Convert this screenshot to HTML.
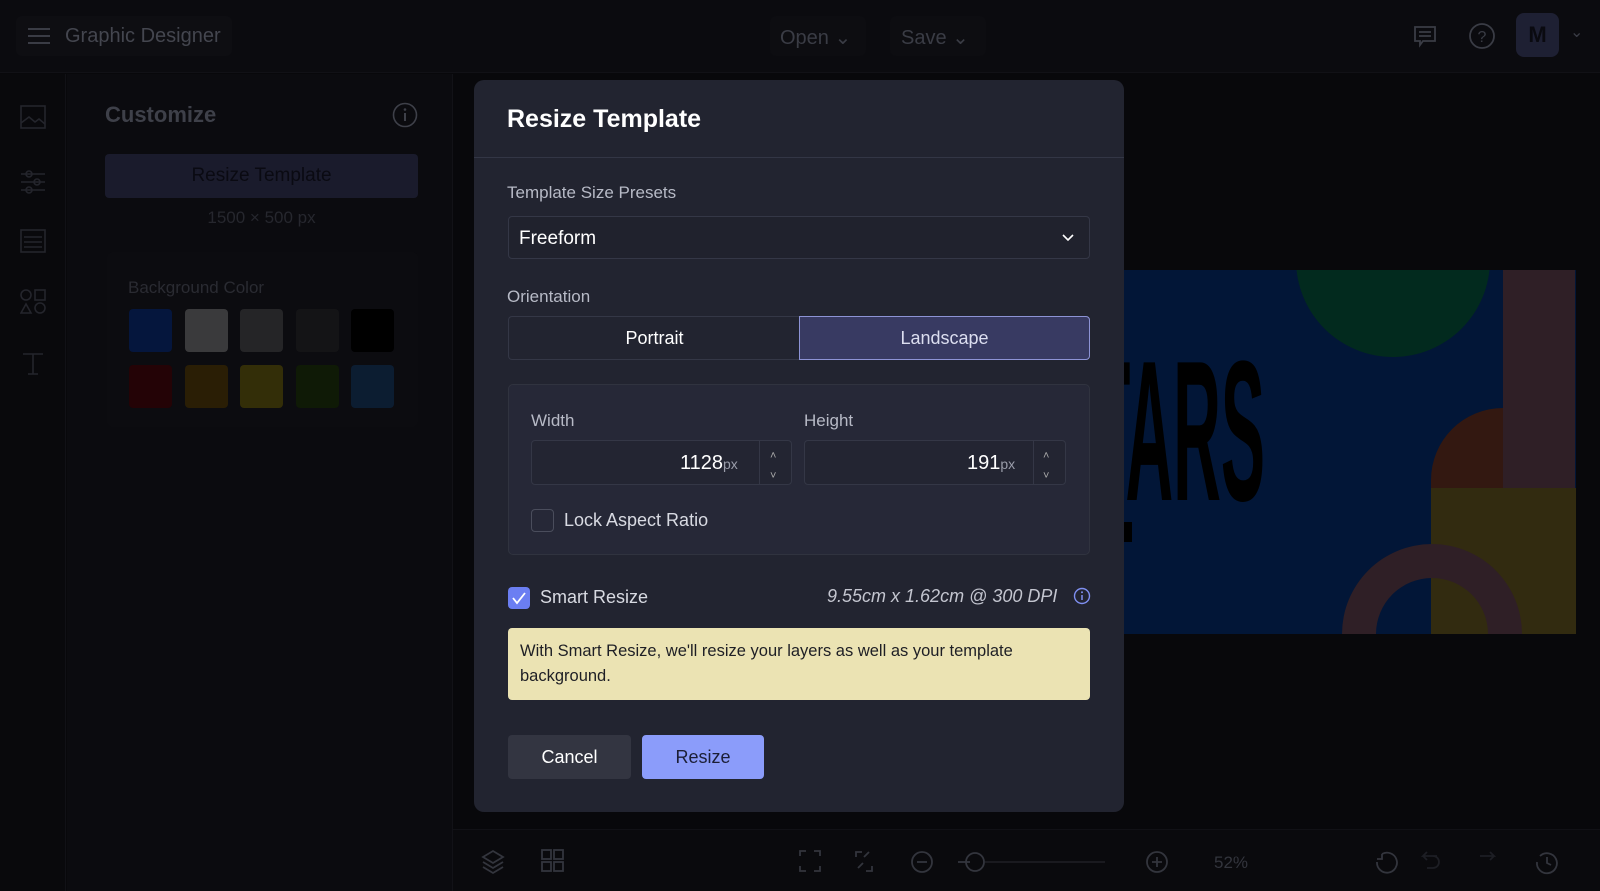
<!DOCTYPE html>
<html><head><meta charset="utf-8"><style>
*{box-sizing:border-box;margin:0;padding:0}
body{width:1600px;height:891px;background:#08080b;font-family:"Liberation Sans",sans-serif;position:relative;overflow:hidden;color:#fff}
.a{position:absolute}
.dim{color:#3b3d46}
.lbl{font-size:17px;color:#b7bac6}
</style></head><body>
<!-- top bar -->
<div class="a" style="left:0;top:0;width:1600px;height:73px;background:#0b0b0f;border-bottom:1px solid #111116"></div>
<div class="a" style="left:16px;top:16px;width:216px;height:40px;background:#0e0e12;border-radius:6px"></div>
<svg class="a" style="left:27px;top:26px" width="24" height="20"><g stroke="#3a3c45" stroke-width="2"><line x1="1" y1="3" x2="23" y2="3"/><line x1="1" y1="10" x2="23" y2="10"/><line x1="1" y1="17" x2="23" y2="17"/></g></svg>
<div class="a dim" style="left:65px;top:25px;font-size:20px;color:#44464f">Graphic Designer</div>
<div class="a" style="left:770px;top:16px;width:96px;height:40px;background:#0d0d11;border-radius:6px"></div>
<div class="a" style="left:780px;top:25px;font-size:20px;color:#3a3c45">Open ⌄</div>
<div class="a" style="left:890px;top:16px;width:96px;height:40px;background:#0d0d11;border-radius:6px"></div>
<div class="a" style="left:901px;top:25px;font-size:20px;color:#3a3c45">Save ⌄</div>
<svg class="a" style="left:1413px;top:24px" width="24" height="24"><path d="M2 3h20v14H10l-3 4v-4H2z M6 8h12 M6 12h12" fill="none" stroke="#3a3c45" stroke-width="1.8"/></svg>
<svg class="a" style="left:1468px;top:22px" width="28" height="28"><circle cx="14" cy="14" r="12" fill="none" stroke="#3a3c45" stroke-width="1.8"/><text x="14" y="20" font-size="16" text-anchor="middle" fill="#3a3c45" font-family="Liberation Sans">?</text></svg>
<div class="a" style="left:1516px;top:13px;width:43px;height:44px;background:#1e2033;border-radius:8px;color:#0a0a10;font-size:22px;font-weight:bold;text-align:center;line-height:44px">M</div>
<div class="a" style="left:1570px;top:22px;font-size:16px;color:#3a3c45">⌄</div>
<!-- left strip -->
<div class="a" style="left:0;top:74px;width:66px;height:817px;background:#09090c;border-right:1px solid #111116"></div>
<svg class="a" style="left:20px;top:105px" width="26" height="270"><g fill="none" stroke="#24252c" stroke-width="1.6"><rect x="1" y="1" width="24" height="22"/><path d="M1 18l8-6 6 5 4-3 6 5"/><path d="M1 69h24M1 77h24M1 85h24"/><circle cx="9" cy="69" r="3"/><circle cx="17" cy="77" r="3"/><circle cx="9" cy="85" r="3"/><rect x="1" y="125" width="24" height="22"/><path d="M4 132h18M4 137h18M4 142h18"/><circle cx="6" cy="190" r="5"/><rect x="15" y="185" width="10" height="10"/><path d="M1 208l5-9 5 9z"/><circle cx="20" cy="203" r="5"/><path d="M3 249h20M13 249v20M8 269h10"/></g></svg>
<!-- left panel -->
<div class="a" style="left:67px;top:74px;width:386px;height:817px;background:#0b0b0f;border-right:1px solid #121217"></div>
<div class="a" style="left:105px;top:102px;font-size:22px;font-weight:bold;color:#3e4049">Customize</div>
<svg class="a" style="left:392px;top:102px" width="26" height="26"><circle cx="13" cy="13" r="11.5" fill="none" stroke="#3e4049" stroke-width="1.6"/><path d="M13 11v8" stroke="#3e4049" stroke-width="2"/><circle cx="13" cy="7.5" r="1.3" fill="#3e4049"/></svg>
<div class="a" style="left:105px;top:154px;width:313px;height:44px;background:#1a1b2c;border-radius:4px;text-align:center;line-height:44px;font-size:19px;color:#0a0a12">Resize Template</div>
<div class="a" style="left:105px;top:208px;width:313px;text-align:center;font-size:17px;color:#26272e">1500 × 500 px</div>
<div class="a" style="left:107px;top:252px;width:311px;height:175px;background:#0c0c10;border-radius:6px"></div>
<div class="a" style="left:128px;top:278px;font-size:17px;color:#2a2b32">Background Color</div>
<div class="a" style="left:129px;top:309px;width:43px;height:43px;background:#05163d;border-radius:4px"></div>
<div class="a" style="left:185px;top:309px;width:43px;height:43px;background:#3a3a3c;border-radius:4px"></div>
<div class="a" style="left:240px;top:309px;width:43px;height:43px;background:#252527;border-radius:4px"></div>
<div class="a" style="left:296px;top:309px;width:43px;height:43px;background:#141416;border-radius:4px"></div>
<div class="a" style="left:351px;top:309px;width:43px;height:43px;background:#000;border-radius:4px"></div>
<div class="a" style="left:129px;top:365px;width:43px;height:43px;background:#240306;border-radius:4px"></div>
<div class="a" style="left:185px;top:365px;width:43px;height:43px;background:#2a1e05;border-radius:4px"></div>
<div class="a" style="left:240px;top:365px;width:43px;height:43px;background:#332e08;border-radius:4px"></div>
<div class="a" style="left:296px;top:365px;width:43px;height:43px;background:#0f1a06;border-radius:4px"></div>
<div class="a" style="left:351px;top:365px;width:43px;height:43px;background:#0c1d31;border-radius:4px"></div>
<!-- canvas -->
<svg class="a" style="left:1100px;top:270px" width="476" height="364"><rect x="0" y="0" width="476" height="364" fill="#021637"/><circle cx="293" cy="-10" r="97" fill="#022a1e"/><rect x="403" y="0" width="72" height="218" fill="#2f1f26"/><path d="M331 210a72 72 0 0 1 72-72v80h-72z" fill="#331811"/><rect x="331" y="218" width="145" height="146" fill="#322b10"/><path d="M242 364a90 90 0 0 1 180 0h-34a56 56 0 0 0-112 0z" fill="#2f1f26"/><text x="-10" y="230" font-family="Liberation Sans" font-weight="bold" font-size="200" fill="#000" textLength="175" lengthAdjust="spacingAndGlyphs">TARS</text><rect x="24" y="252" width="8" height="20" fill="#000"/></svg>
<!-- bottom bar -->
<div class="a" style="left:453px;top:829px;width:1147px;height:62px;background:#0a0a0d;border-top:1px solid #111116"></div>
<svg class="a" style="left:480px;top:848px" width="1120" height="30"><g fill="none" stroke="#33353d" stroke-width="1.8"><path d="M3 9l10-6 10 6-10 6z M3 14l10 6 10-6 M3 19l10 6 10-6"/><rect x="62" y="2" width="9" height="9"/><rect x="74" y="2" width="9" height="9"/><rect x="62" y="14" width="9" height="9"/><rect x="74" y="14" width="9" height="9"/><path d="M320 8V3h6M334 3h6v5M340 18v5h-6M326 23h-6v-5"/><path d="M376 9V4h6M389 4l-5 5M392 18v5h-6M378 20l5-5"/><circle cx="442" cy="14" r="10"/><path d="M437 14h10"/><path d="M478 14h12"/><circle cx="495" cy="14" r="9"/><path d="M505 14h120" stroke="#1c1d22"/><circle cx="677" cy="14" r="10"/><path d="M672 14h10M677 9v10"/><path d="M902 6a10 10 0 1 1-5 8M902 6v5h-5"/><path d="M957 8h-14l4-4M943 8l4 4M943 8h10a6 6 0 0 1 0 12h-6" stroke="#1d1e24"/><path d="M1000 8h14l-4-4M1014 8l-4 4" stroke="#1d1e24"/><path d="M1060 8a10 10 0 1 1-3 6M1067 9v6l4 2"/></g><text x="734" y="20" font-size="17" fill="#33353d" font-family="Liberation Sans">52%</text></svg>
<!-- dialog -->
<div class="a" style="left:474px;top:80px;width:650px;height:732px;background:#222430;border-radius:10px"></div>
<div class="a" style="left:507px;top:105px;font-size:25px;font-weight:bold">Resize Template</div>
<div class="a" style="left:474px;top:157px;width:650px;height:1px;background:#333645"></div>
<div class="a lbl" style="left:507px;top:183px">Template Size Presets</div>
<div class="a" style="left:508px;top:216px;width:582px;height:43px;border:1px solid #343746;border-radius:4px;background:#20222d"></div>
<div class="a" style="left:519px;top:228px;font-size:19px">Freeform</div>
<svg class="a" style="left:1062px;top:233px" width="12" height="10"><path d="M1 2l5 5 5-5" fill="none" stroke="#fff" stroke-width="1.6"/></svg>
<div class="a lbl" style="left:507px;top:287px">Orientation</div>
<div class="a" style="left:508px;top:316px;width:292px;height:44px;border:1px solid #343746;border-right:none;border-radius:4px 0 0 4px;text-align:center;line-height:42px;font-size:18px">Portrait</div>
<div class="a" style="left:799px;top:316px;width:291px;height:44px;border:1px solid #8d93d6;background:#383a62;border-radius:0 4px 4px 0;text-align:center;line-height:42px;font-size:18px;color:#dcdef0">Landscape</div>
<div class="a" style="left:508px;top:384px;width:582px;height:171px;border:1px solid #30333f;background:#262837;border-radius:5px"></div>
<div class="a lbl" style="left:531px;top:411px">Width</div>
<div class="a lbl" style="left:804px;top:411px">Height</div>
<div class="a" style="left:531px;top:440px;width:261px;height:45px;border:1px solid #343746;border-radius:4px;background:#232532"></div>
<div class="a" style="left:759px;top:441px;width:1px;height:43px;background:#343746"></div>
<div class="a" style="left:680px;top:452px;font-size:20px">1128<span style="font-size:14px;color:#9a9daa">px</span></div>
<div class="a" style="left:770px;top:446px;font-size:11px;color:#aaa;line-height:20px">˄<br>˅</div>
<div class="a" style="left:804px;top:440px;width:262px;height:45px;border:1px solid #343746;border-radius:4px;background:#232532"></div>
<div class="a" style="left:1033px;top:441px;width:1px;height:43px;background:#343746"></div>
<div class="a" style="left:967px;top:452px;font-size:20px">191<span style="font-size:14px;color:#9a9daa">px</span></div>
<div class="a" style="left:1043px;top:446px;font-size:11px;color:#aaa;line-height:20px">˄<br>˅</div>
<div class="a" style="left:531px;top:509px;width:23px;height:23px;border:1.5px solid #4a4d5c;border-radius:4px"></div>
<div class="a" style="left:564px;top:510px;font-size:18px;color:#d8dae2">Lock Aspect Ratio</div>
<div class="a" style="left:508px;top:587px;width:22px;height:22px;background:#6b7ef2;border-radius:4px"></div>
<svg class="a" style="left:511px;top:591px" width="16" height="14"><path d="M2 7l4 5 8-10" fill="none" stroke="#fff" stroke-width="1.8"/></svg>
<div class="a" style="left:540px;top:587px;font-size:18px;color:#d8dae2">Smart Resize</div>
<div class="a" style="left:827px;top:586px;font-size:18px;font-style:italic;color:#c3c5cf">9.55cm x 1.62cm @ 300 DPI</div>
<svg class="a" style="left:1073px;top:587px" width="18" height="18"><circle cx="9" cy="9" r="7.5" fill="none" stroke="#7f8ff0" stroke-width="1.4"/><path d="M9 8v5" stroke="#7f8ff0" stroke-width="1.5"/><circle cx="9" cy="5.3" r="1" fill="#7f8ff0"/></svg>
<div class="a" style="left:508px;top:628px;width:582px;height:72px;background:#ebe3b3;border-radius:4px;color:#1e1f25;font-size:16.5px;line-height:25px;padding:11px 12px">With Smart Resize, we'll resize your layers as well as your template background.</div>
<div class="a" style="left:508px;top:735px;width:123px;height:44px;background:#333541;border-radius:4px;text-align:center;line-height:44px;font-size:18px">Cancel</div>
<div class="a" style="left:642px;top:735px;width:122px;height:44px;background:#8b9cfa;border-radius:4px;text-align:center;line-height:44px;font-size:18px;color:#1b1e36">Resize</div>
</body></html>
